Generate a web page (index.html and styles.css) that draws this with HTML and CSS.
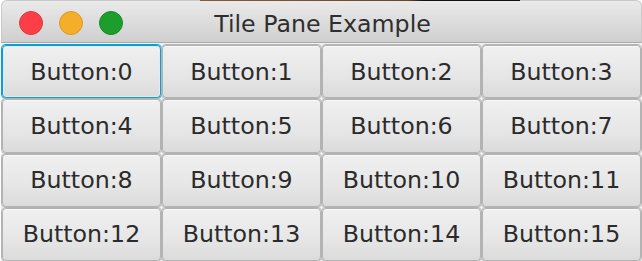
FILE: index.html
```html
<!DOCTYPE html>
<html>
<head>
<meta charset="utf-8">
<link rel="stylesheet" href="styles.css">
</head>
<body>
<div class="desk"></div>
<div class="window">
  <div class="titlebar">
    <div class="lights">
      <span class="light red"></span>
      <span class="light yellow"></span>
      <span class="light green"></span>
    </div>
    <div class="title">Tile Pane Example</div>
  </div>
  <div class="pane">
    <button class="btn focused">Button:0</button>
    <button class="btn">Button:1</button>
    <button class="btn">Button:2</button>
    <button class="btn">Button:3</button>
    <button class="btn">Button:4</button>
    <button class="btn">Button:5</button>
    <button class="btn">Button:6</button>
    <button class="btn">Button:7</button>
    <button class="btn">Button:8</button>
    <button class="btn">Button:9</button>
    <button class="btn">Button:10</button>
    <button class="btn">Button:11</button>
    <button class="btn">Button:12</button>
    <button class="btn">Button:13</button>
    <button class="btn">Button:14</button>
    <button class="btn">Button:15</button>
  </div>
</div>
</body>
</html>
```
FILE: styles.css
```css
html, body {
  margin: 0;
  padding: 0;
  width: 642px;
  height: 261px;
  overflow: hidden;
  background: #ffffff;
}
body {
  position: relative;
  font-family: "DejaVu Sans", sans-serif;
}
.desk {
  position: absolute;
  z-index: 2;
  left: 200px;
  top: 0;
  width: 320px;
  height: 1px;
  background: linear-gradient(to right, #8a5a36 0%, #6e4526 65%, #111 70%, #111 100%);
}
.window {
  position: relative;
  margin: 0 0 0 1px;
  width: 641px;
  height: 261px;
  display: flex;
  flex-direction: column;
}
.titlebar {
  position: relative;
  height: 43px;
  flex: none;
  box-sizing: border-box;
  border: 1px solid #c9c9c9;
  border-bottom: 1px solid #a9a9a9;
  border-radius: 6px 6px 0 0;
  background: linear-gradient(to bottom, #eaeaea 0%, #dadada 60%, #cfcfcf 100%);
  display: flex;
  align-items: center;
  justify-content: center;
}
.lights {
  position: absolute;
  left: 17px;
  top: 10px;
  display: flex;
  gap: 16px;
}
.light {
  width: 24px;
  height: 24px;
  border-radius: 50%;
  box-sizing: border-box;
}
.red { background: #fc3f47; border: 1px solid #e0353c; }
.yellow { background: #f5ae2a; border: 1px solid #dc9a22; }
.green { background: #1d9e2c; border: 1px solid #178a24; }
.title {
  font-size: 23.7px;
  color: #2e2e2e;
  margin-left: 2px;
  margin-top: 4px;
}
.pane {
  flex: 1;
  display: grid;
  grid-template-columns: repeat(4, 1fr);
  grid-auto-rows: 1fr;
  gap: 1px;
  padding: 2px 1px 0 1px;
  background: #f2f2f2;
}
.btn {
  margin: 0;
  font-family: "DejaVu Sans", sans-serif;
  font-size: 23.7px;
  color: #2b2b2b;
  border: 1px solid #b3b3b3;
  border-radius: 4px;
  box-shadow: 0 0 0 1px #b3b3b3, inset 0 1px 0 #fafafa;
  background: linear-gradient(to bottom, #f0f0f0 0%, #e6e6e6 60%, #dbdbdb 100%);
  padding: 0;
}
.btn.focused {
  border-color: #0a9dd6;
  box-shadow: 0 0 0 1px #0a9dd6, inset 0 0 0 1px #dbeef6;
}
```
